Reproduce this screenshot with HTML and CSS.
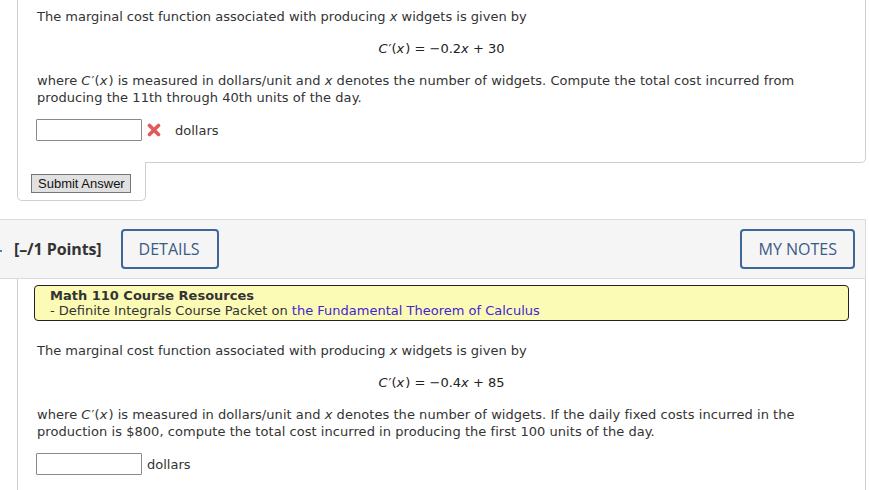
FILE: index.html
```html
<!DOCTYPE html>
<html lang="en">
<head>
<meta charset="utf-8">
<title>Questions</title>
<link rel="stylesheet" href="styles.css">
</head>
<body>
<div class="question">
  <div class="panel panel-first">
    <p class="text first">The marginal cost function associated with producing <i>x</i> widgets is given by</p>
    <p class="formula"><i class="v">C</i>′(<i class="v">x</i>) = −0.2<i>x</i> + 30</p>
    <p class="text">where <i class="v">C</i>′(<i class="v">x</i>) is measured in dollars/unit and <i>x</i> denotes the number of widgets. Compute the total cost incurred from producing the 11th through 40th units of the day.</p>
    <div class="answer">
      <span class="input"></span>
      <svg class="wrong" width="14" height="14" viewBox="0 0 14 14"><path d="M2.5 2.5 L11.5 11.5 M11.5 2.5 L2.5 11.5" stroke="#e15a5a" stroke-width="3.6" stroke-linecap="round"/></svg>
      <span class="unit unit-after-icon">dollars</span>
    </div>
  </div>
  <div class="tab"><span class="submit">Submit Answer</span></div>
</div>

<div class="question second">
  <div class="header">
    <span class="qdot"></span>
    <span class="points">[–/1 Points]</span>
    <span class="btn">DETAILS</span>
    <span class="spacer"></span>
    <span class="btn notes">MY NOTES</span>
  </div>
  <div class="panel panel-second">
    <div class="resources">
      <div class="res-title">Math 110 Course Resources</div>
      <div class="res-line">- Definite Integrals Course Packet on <span class="link">the Fundamental Theorem of Calculus</span></div>
    </div>
    <p class="text first">The marginal cost function associated with producing <i>x</i> widgets is given by</p>
    <p class="formula"><i class="v">C</i>′(<i class="v">x</i>) = −0.4<i>x</i> + 85</p>
    <p class="text">where <i class="v">C</i>′(<i class="v">x</i>) is measured in dollars/unit and <i>x</i> denotes the number of widgets. If the daily fixed costs incurred in the production is $800, compute the total cost incurred in producing the first 100 units of the day.</p>
    <div class="answer">
      <span class="input"></span>
      <span class="unit">dollars</span>
    </div>
  </div>
</div>
</body>
</html>
```
FILE: styles.css
```css
html, body {
  margin: 0;
  padding: 0;
  background: #fff;
}
body {
  font-family: "DejaVu Sans", Verdana, sans-serif;
  font-size: 13px;
  line-height: 17px;
  color: #333;
  width: 869px;
  overflow: hidden;
}
.v {
  padding-right: 1px;
}
.panel {
  margin-left: 17px;
  width: 849px;
  box-sizing: border-box;
  border: 1px solid #cfcfcf;
  border-top: none;
  padding: 0 19px 0 19px;
}
.panel-first {
  padding-top: 8px;
  padding-bottom: 21px;
  border-radius: 0 0 5px 0;
}
.text {
  margin: 15px 0 0 0;
  letter-spacing: 0.05px;
}
.text.first {
  margin-top: 0;
  letter-spacing: 0;
}
.formula {
  margin: 15px 0 0 0;
  text-align: center;
  color: #222;
}
.answer {
  margin-top: 13px;
  margin-left: -1px;
  display: flex;
  align-items: center;
  height: 22px;
}
.input {
  width: 106px;
  height: 22px;
  box-sizing: border-box;
  border: 1px solid #8a8a8a;
  border-radius: 1px;
  background: #fff;
}
.wrong {
  margin-left: 5px;
}
.unit {
  margin-left: 5px;
}
.unit-after-icon {
  margin-left: 14px;
}
.tab {
  margin-left: 17px;
  margin-top: -1px;
  width: 129px;
  box-sizing: border-box;
  background: #fff;
  border: 1px solid #cfcfcf;
  border-top: none;
  border-radius: 0 0 5px 5px;
  padding: 12px 0 7px 13px;
  position: relative;
}
.submit {
  display: inline-block;
  font-family: "Liberation Sans", Arial, sans-serif;
  font-size: 13px;
  line-height: 15px;
  color: #111;
  background: #e1e1e1;
  border: 1px solid #767676;
  padding: 1px 5px 1px 6px;
}
.second {
  margin-top: 18px;
}
.header {
  width: 866px;
  height: 60px;
  box-sizing: border-box;
  background: #f5f5f5;
  border: 1px solid #dcdcdc;
  border-left: none;
  display: flex;
  align-items: center;
  padding-right: 10px;
  font-family: "Open Sans", sans-serif;
}
.qdot {
  width: 2px;
  height: 2px;
  background: #4a7fc1;
  margin-top: 3px;
}
.points {
  margin-left: 12px;
  font-weight: 700;
  font-size: 16px;
  color: #333;
  letter-spacing: -0.1px;
}
.btn {
  margin-left: 19px;
  height: 40px;
  box-sizing: border-box;
  border: 2px solid #3d6699;
  border-radius: 4px;
  padding: 0 17px 0 16px;
  display: flex;
  align-items: center;
  font-size: 16px;
  color: #3c5a86;
  background: #f5f5f5;
}
.spacer {
  flex: 1;
}
.btn.notes {
  margin-left: 0;
  padding: 0 16px 0 17px;
}
.panel-second {
  padding-top: 6px;
  padding-bottom: 30px;
  padding-left: 16px;
  padding-right: 16px;
}
.panel-second .text,
.panel-second .formula,
.panel-second .answer {
  margin-left: 3px;
  margin-right: 3px;
}
.panel-second .answer {
  margin-left: 2px;
  margin-top: 13px;
}
.resources {
  background: #fbfbb6;
  border: 1px solid #222;
  border-radius: 4px;
  padding: 0 0 2px 15px;
  line-height: 15px;
  margin-bottom: 21px;
}
.res-title {
  font-weight: 700;
  padding-top: 2px;
}
.link {
  color: #4325cf;
}
.panel-second .formula,
.panel-second .text {
  margin-top: 15px;
}
.panel-second .text.first {
  margin-top: 0;
}
```
